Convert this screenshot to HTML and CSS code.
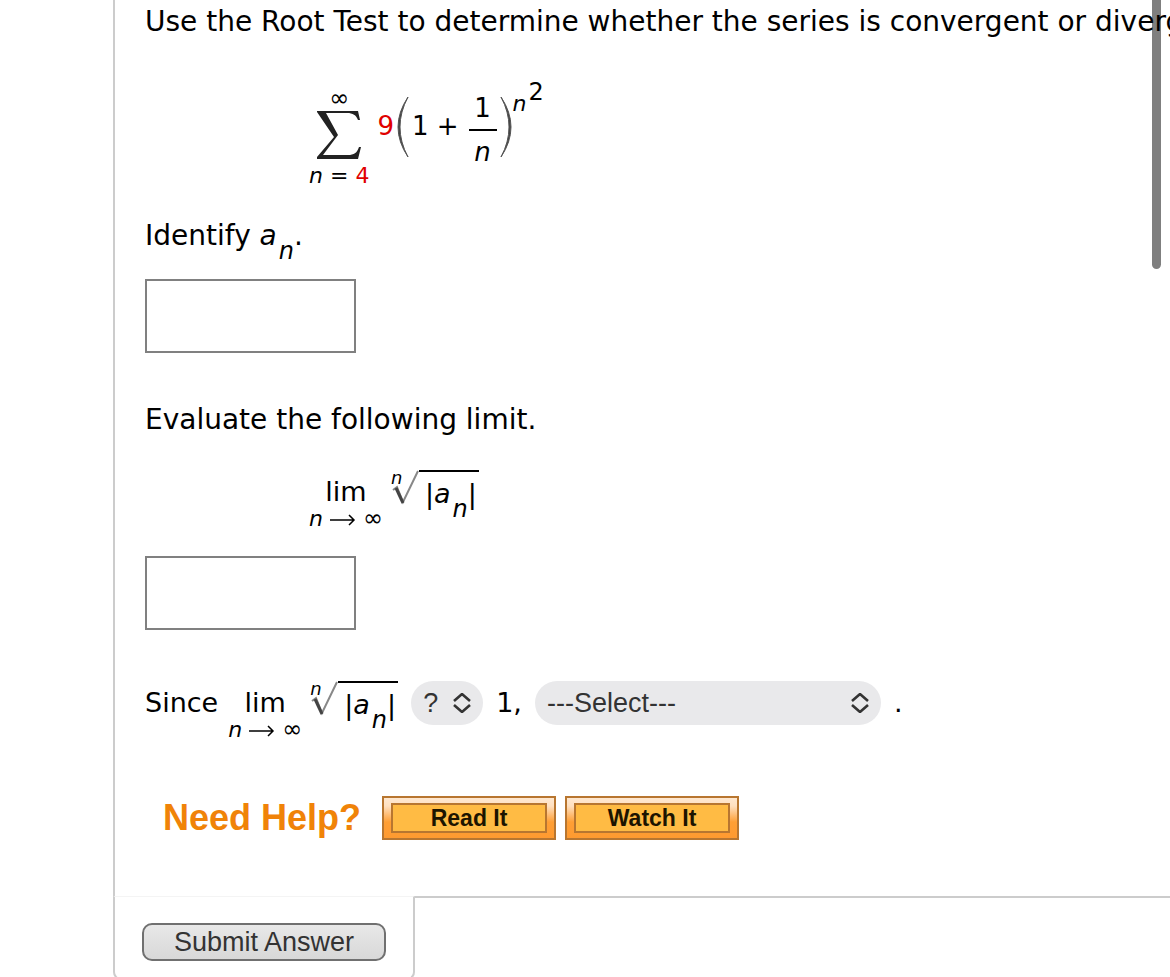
FILE: index.html
```html
<!DOCTYPE html>
<html lang="en">
<head>
  <meta charset="UTF-8">
  <title>Root Test</title>
  <link rel="stylesheet" href="styles.css">
</head>
<body>
  <main class="question">
    <form>
      <div class="content">
        <p class="text intro">Use the Root Test to determine whether the series is convergent or divergent.</p>

        <!-- series -->
        <div class="series">
          <div class="stack">
            <span class="small infinity">∞</span>
            <svg class="sigma" width="46" height="50" viewBox="0 0 46 50">
              <path d="M1 1H42L44 10H42C40 5 37 3 31 3H10L22 25L7 45H32C38 45 41 43 43 37H45L42 49H1V47L18 27L1 2Z" fill="#222"/>
            </svg>
            <span class="small"><i>n</i> = <span class="red">4</span></span>
          </div>
          <span class="red nine">9</span>
          <svg class="paren" width="14" height="62" viewBox="0 0 14 62">
            <path d="M12 1Q-8 31 12 61Q-4 31 12 1Z" fill="#444" stroke="#555"/>
          </svg>
          <span class="plus">1 +</span>
          <span class="fraction"><span>1</span><i>n</i></span>
          <svg class="paren" width="14" height="62" viewBox="0 0 14 62">
            <path d="M2 1Q22 31 2 61Q18 31 2 1Z" fill="#444" stroke="#555"/>
          </svg>
          <span class="power"><i>n</i><span class="square">2</span></span>
        </div>

        <label class="text" for="term">Identify <i>a</i><i class="sub">n</i>.</label>
        <input class="answer" id="term" type="text">

        <label class="text evaluate" for="limit">Evaluate the following limit.</label>
        <div class="limit-row indent">
          <span class="limit"><span>lim</span><span class="small under"><i>n</i>
            <svg width="26" height="12" viewBox="0 0 26 12"><path d="M0 6H24M19 1L24 6L19 11" fill="none" stroke="#000" stroke-width="1.5"/></svg>
            <span class="infinity">∞</span></span></span>
          <span class="root">
            <i class="index">n</i>
            <svg width="28" height="36" viewBox="0 0 28 36"><path d="M2 20L6 17L12 32L27 1" fill="none" stroke="#888" stroke-width="2"/><path d="M5 18L12 33" stroke="#444" stroke-width="3"/></svg>
            <span class="radicand">|<i>a</i><i class="sub">n</i>|</span>
          </span>
        </div>
        <input class="answer" id="limit" type="text">

        <div class="limit-row since">
          <span class="word">Since</span>
          <span class="limit"><span>lim</span><span class="small under"><i>n</i>
            <svg width="26" height="12" viewBox="0 0 26 12"><path d="M0 6H24M19 1L24 6L19 11" fill="none" stroke="#000" stroke-width="1.5"/></svg>
            <span class="infinity">∞</span></span></span>
          <span class="root">
            <i class="index">n</i>
            <svg width="28" height="36" viewBox="0 0 28 36"><path d="M2 20L6 17L12 32L27 1" fill="none" stroke="#888" stroke-width="2"/><path d="M5 18L12 33" stroke="#444" stroke-width="3"/></svg>
            <span class="radicand">|<i>a</i><i class="sub">n</i>|</span>
          </span>
          <span class="picker compare">
            <select aria-label="Comparison"><option>?</option><option>&lt;</option><option>=</option><option>&gt;</option></select>
            <svg class="arrows" width="18" height="20" viewBox="0 0 18 20"><path d="M1 8L9 1L17 8M1 12L9 19L17 12" fill="none" stroke="#333" stroke-width="2.6"/></svg>
          </span>
          <span class="word">1,</span>
          <span class="picker result">
            <select aria-label="Conclusion"><option>---Select---</option><option>the series is convergent</option><option>the series is divergent</option></select>
            <svg class="arrows" width="18" height="20" viewBox="0 0 18 20"><path d="M1 8L9 1L17 8M1 12L9 19L17 12" fill="none" stroke="#333" stroke-width="2.6"/></svg>
          </span>
          <span class="word">.</span>
        </div>

        <div class="help">
          <strong>Need Help?</strong>
          <button type="button">Read It</button>
          <button type="button">Watch It</button>
        </div>
      </div>

      <div class="footer">
        <div class="submit-box"><button class="submit">Submit Answer</button></div>
        <div class="rest"></div>
      </div>
    </form>
  </main>
  <div class="scrollbar"></div>
</body>
</html>
```
FILE: styles.css
```css
* {
  box-sizing: border-box;
}

body {
  margin: 0;
  background: #fff;
  color: #000;
  font-family: Verdana, "DejaVu Sans", sans-serif;
  font-size: 28px;
  line-height: 36px;
}

svg {
  flex: none;
}

.question {
  margin-left: 113px;
  height: 100vh;
  overflow: hidden;
}

.content {
  border-left: 2px solid #ccc;
  padding: 4px 0 56px 30px;
}

.text {
  display: block;
  margin: 0;
  white-space: nowrap;
}

.intro {
  overflow: hidden;
}

.small {
  font-size: 22px;
  line-height: 24px;
}

.infinity {
  font-size: 24px;
}

.red {
  color: #e00000;
}

.sub {
  position: relative;
  top: 14px;
  margin-left: 2px;
  font-size: 24px;
  line-height: 1;
}

/* series */
.series {
  display: flex;
  align-items: center;
  margin: 46px 0 30px 164px;
  font-size: 26px;
}

.stack {
  display: flex;
  flex-direction: column;
  align-items: center;
  margin-right: 8px;
}

.sigma {
  margin: 0 0 4px;
}

.nine {
  margin: 0 2px 22px 0;
}

.paren {
  margin-bottom: 20px;
}

.plus {
  margin: 0 10px 22px 2px;
}

.fraction {
  display: flex;
  flex-direction: column;
  align-items: center;
  width: 28px;
  line-height: 42px;
  margin: 0 2px 14px 0;
}

.fraction span {
  width: 100%;
  text-align: center;
  border-bottom: 2px solid #000;
}

.power {
  display: flex;
  align-items: flex-start;
  align-self: flex-start;
  font-size: 22px;
}

.square {
  margin-left: 2px;
  font-size: 24px;
  line-height: 12px;
}

/* answers */
.answer {
  display: block;
  width: 211px;
  height: 74px;
  margin-top: 25px;
  padding: 8px;
  border: 2px solid #808080;
  background: #fff;
  font: inherit;
}

.evaluate {
  margin-top: 49px;
}

/* limits */
.limit-row {
  display: flex;
  align-items: flex-start;
  font-size: 27px;
}

.indent {
  margin: 32px 0 0 164px;
}

.limit {
  display: flex;
  flex-direction: column;
  align-items: center;
  padding-top: 4px;
}

.under {
  margin-top: -4px;
  white-space: nowrap;
}

.root {
  display: flex;
  position: relative;
  margin-left: 8px;
}

.index {
  position: absolute;
  left: 0;
  top: 0;
  font-size: 18px;
  line-height: 16px;
}

.radicand {
  padding: 4px 2px 0 6px;
  border-top: 2px solid #000;
}

.since {
  margin-top: 51px;
}

.word {
  padding-top: 4px;
}

.since .limit {
  margin-left: 10px;
}

/* drop-downs */
.picker {
  position: relative;
  margin: 0 13px;
}

.picker select {
  appearance: none;
  display: block;
  width: 100%;
  height: 44px;
  padding: 0 12px;
  border: 0;
  border-radius: 22px;
  background: #e9e9eb;
  color: #333;
  font: 27px "Liberation Sans", Arial, sans-serif;
}

.compare {
  width: 72px;
}

.result {
  width: 346px;
}

.arrows {
  position: absolute;
  right: 12px;
  top: 12px;
  pointer-events: none;
}

/* help */
.help {
  display: flex;
  align-items: center;
  gap: 9px;
  margin: 54px 0 0 18px;
  font-family: "Liberation Sans", Arial, sans-serif;
}

.help strong {
  margin-right: 12px;
  color: #f08308;
  font-size: 36px;
}

.help button {
  width: 174px;
  height: 44px;
  padding: 0;
  border: 2px solid #b87630;
  background: linear-gradient(#ffe8d0, #ffe0c0 20%, #ff9f35 60%, #ff9a30);
  font: bold 23px "Liberation Sans", Arial, sans-serif;
  color: #1c1400;
  position: relative;
  z-index: 0;
}

.help button::before {
  content: "";
  position: absolute;
  inset: 5px 7px;
  border: 2px solid #b87630;
  background: #ffbb44;
  z-index: -1;
}

/* submit */
.footer {
  display: flex;
}

.submit-box {
  width: 302px;
  height: 84px;
  padding: 26px 27px 0;
  border: 2px solid #ccc;
  border-top: 1px solid #f4f4f4;
  border-radius: 0 0 8px 8px;
}

.submit {
  display: block;
  width: 244px;
  height: 38px;
  padding: 0;
  border: 2px solid #707070;
  border-radius: 10px;
  background: linear-gradient(#e8e8e8, #d8d8d8);
  color: #333;
  font: 27px "Liberation Sans", Arial, sans-serif;
}

.rest {
  flex: 1;
  border-top: 2px solid #ccc;
}

.scrollbar {
  position: absolute;
  top: 0;
  right: 9px;
  width: 9px;
  height: 269px;
  border-radius: 0 0 5px 5px;
  background: rgba(0, 0, 0, 0.5);
}
```
